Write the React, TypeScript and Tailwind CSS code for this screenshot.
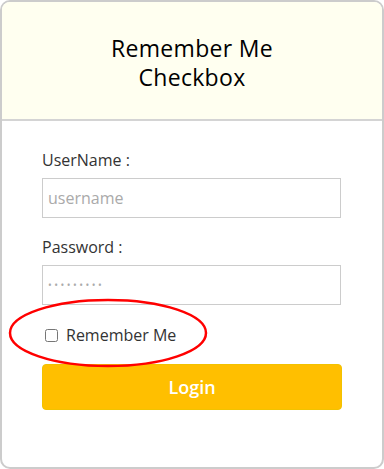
import { useState } from "react"

export default function App() {
  const [remember, setRemember] = useState(false)

  return (
    <div className="h-[469px] w-[384px] bg-white" style={{ fontFamily: '"Open Sans", "Liberation Sans", sans-serif' }}>
      <div className="relative flex h-[469px] flex-col overflow-hidden rounded-[10px] border-2 border-[#cccccc] bg-white">
        <div className="flex h-[119px] shrink-0 flex-col items-center justify-center border-b-2 border-[#d4d4d4] bg-[#fffff0] pt-1 text-[23px] leading-[29px] tracking-[0.3px] text-black">
          <span>Remember Me</span>
          <span>Checkbox</span>
        </div>

        <form className="flex flex-col px-[40px] pt-[29px]" onSubmit={(e) => e.preventDefault()}>
          <label className="mb-[8px] text-[16px] leading-[20px] text-[#333333]">UserName :</label>
          <input
            type="text"
            placeholder="username"
            className="h-[40px] w-[299px] border border-[#cccccc] px-[5px] text-[16px] text-[#333] placeholder:text-[#aaaaaa] outline-none"
          />

          <label className="mb-[8px] mt-[19px] text-[16px] leading-[20px] text-[#333333]">Password :</label>
          <input
            type="password"
            defaultValue="password1"
            className="h-[40px] w-[299px] border border-[#cccccc] px-[5px] text-[10px] tracking-[2.5px] text-[#aaaaaa] outline-none"
          />

          <label className="mt-[21px] flex h-[18px] items-center gap-[8px] pl-[3px] text-[16px] text-[#333333]">
            <input
              type="checkbox"
              checked={remember}
              onChange={(e) => setRemember(e.target.checked)}
              className="h-[13px] w-[13px]"
            />
            Remember Me
          </label>

          <button
            type="submit"
            className="mt-[20px] h-[46px] w-[300px] rounded-[4px] border border-[#f2c200] bg-[#ffbf00] text-[18px] font-semibold text-white"
          >
            Login
          </button>
        </form>

        <svg className="pointer-events-none absolute left-[5px] top-[295px]" width="202" height="72" viewBox="0 0 202 72">
          <ellipse cx="101" cy="36" rx="98" ry="33" fill="none" stroke="#ff0000" strokeWidth="2.5" />
        </svg>
      </div>
    </div>
  )
}
